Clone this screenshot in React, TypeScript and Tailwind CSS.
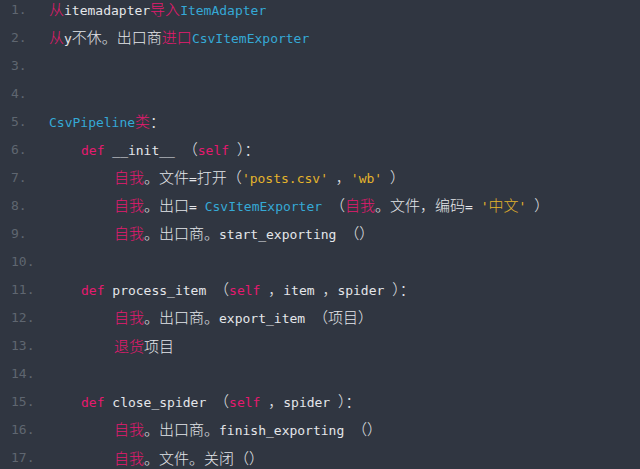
type Tok = [string, string];

const PINK = "text-[#e5196f]";
const CYAN = "text-[#35a9d6]";
const YELLOW = "text-[#e4b42c]";
const WHITE = "text-[#e4e6ea]";

const lines: { indent: number; toks: Tok[] }[] = [
    { indent: 0, toks: [[PINK, "从"], [WHITE, "itemadapter"], [PINK, "导入"], [CYAN, "ItemAdapter"]] },
    { indent: 0, toks: [[PINK, "从"], [WHITE, "y不休。出口商"], [PINK, "进口"], [CYAN, "CsvItemExporter"]] },
    { indent: 0, toks: [] },
    { indent: 0, toks: [] },
    { indent: 0, toks: [[CYAN, "CsvPipeline"], [PINK, "类"], [WHITE, "："]] },
    { indent: 1, toks: [[PINK, "def"], [WHITE, " __init__ （"], [PINK, "self"], [WHITE, " ）："]] },
    { indent: 2, toks: [[PINK, "自我"], [WHITE, "。文件=打开（"], [YELLOW, "'posts.csv'"], [WHITE, " ，"], [YELLOW, "'wb'"], [WHITE, " ）"]] },
    { indent: 2, toks: [[PINK, "自我"], [WHITE, "。出口= "], [CYAN, "CsvItemExporter"], [WHITE, " （"], [PINK, "自我"], [WHITE, "。文件，编码= "], [YELLOW, "'中文'"], [WHITE, " ）"]] },
    { indent: 2, toks: [[PINK, "自我"], [WHITE, "。出口商。start_exporting （）"]] },
    { indent: 0, toks: [] },
    { indent: 1, toks: [[PINK, "def"], [WHITE, " process_item （"], [PINK, "self"], [WHITE, " ，item ，spider ）："]] },
    { indent: 2, toks: [[PINK, "自我"], [WHITE, "。出口商。export_item （项目）"]] },
    { indent: 2, toks: [[PINK, "退货"], [WHITE, "项目"]] },
    { indent: 0, toks: [] },
    { indent: 1, toks: [[PINK, "def"], [WHITE, " close_spider （"], [PINK, "self"], [WHITE, " ，spider ）："]] },
    { indent: 2, toks: [[PINK, "自我"], [WHITE, "。出口商。finish_exporting （）"]] },
    { indent: 2, toks: [[PINK, "自我"], [WHITE, "。文件。关闭（）"]] },
];

const CJK = /[\u3000-\u303f\u4e00-\u9fff\uff00-\uffef]/;

// split a run into latin / CJK pieces so each gets its own font
function Run({ color, text }: { color: string; text: string }) {
    const parts = text.match(/[\u3000-\u303f\u4e00-\u9fff\uff00-\uffef]+|[^\u3000-\u303f\u4e00-\u9fff\uff00-\uffef]+/g) || [];
    return (
        <>
            {parts.map((p, i) =>
                CJK.test(p) ? (
                    <span key={i} className={`${color} text-[15px] font-light font-['Noto_Sans_CJK_SC',sans-serif]`}>
                        {p}
                    </span>
                ) : (
                    <span key={i} className={`${color} text-[13px] font-['DejaVu_Sans_Mono',monospace]`}>
                        {p}
                    </span>
                ),
            )}
        </>
    );
}

export default function App() {
    return (
        <div className="w-[640px] h-[469px] overflow-hidden bg-[#303641]">
            <div className="-mt-[4px] flex flex-col">
                {lines.map((line, n) => (
                    <div key={n} className="flex h-[28px] items-center whitespace-pre">
                        <span className="w-[49px] shrink-0 pl-[11px] text-[13px] leading-[18px] text-[#5f6670] font-['DejaVu_Sans_Mono',monospace]">
                            {n + 1}.
                        </span>
                        <span
                            className={`leading-[18px] ${
                                line.indent === 0 ? "pl-0" : line.indent === 1 ? "pl-[32px]" : "pl-[65px]"
                            }`}
                        >
                            {line.toks.map(([c, t], i) => (
                                <Run key={i} color={c} text={t} />
                            ))}
                        </span>
                    </div>
                ))}
            </div>
        </div>
    );
}
